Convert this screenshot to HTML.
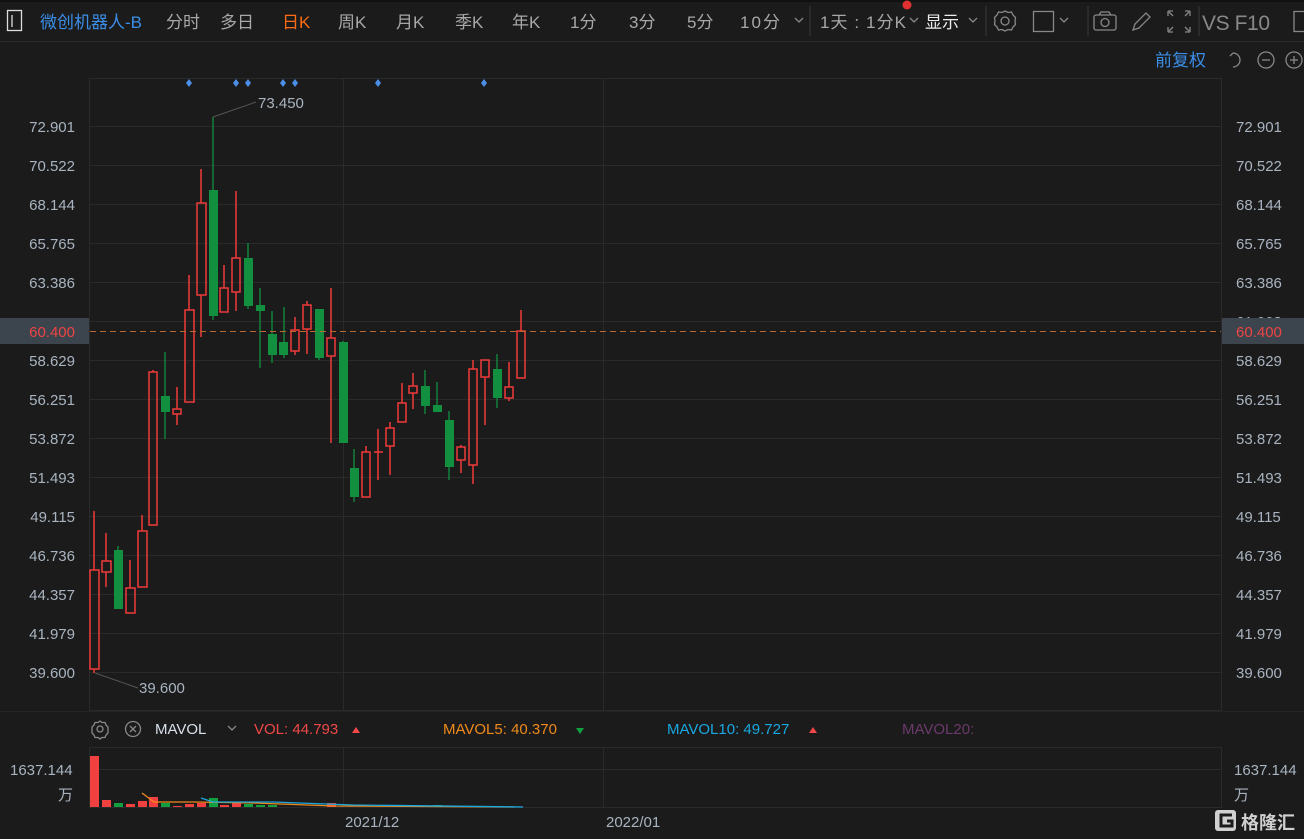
<!DOCTYPE html>
<html><head><meta charset="utf-8"><style>
*{margin:0;padding:0;box-sizing:border-box}
body{width:1304px;height:839px;background:#1b1b1b;overflow:hidden;font-family:"Liberation Sans","Noto Sans CJK SC",sans-serif;position:relative;color:#b0b0b0}
</style></head><body>
<svg width="1304" height="839" style="position:absolute;left:0;top:0" font-family="Liberation Sans, Noto Sans CJK SC, sans-serif">
<rect x="0" y="0" width="1304" height="2" fill="#111"/>
<line x1="0" y1="41.5" x2="1304" y2="41.5" stroke="#2a2a2a"/>
<rect x="7.5" y="10.5" width="14" height="20" fill="none" stroke="#ddd" stroke-width="1.3"/>
<line x1="12" y1="15" x2="12" y2="27" stroke="#ddd" stroke-width="1.3"/>
<g font-size="17" fill="#a8a8a8">
<text x="40" y="28" fill="#3b8ee8">微创机器人-B</text>
<text x="166" y="28">分时</text>
<text x="220" y="28">多日</text>
<text x="282" y="28" fill="#ff6a14">日K</text>
<text x="338" y="28">周K</text>
<text x="396" y="28">月K</text>
<text x="455" y="28">季K</text>
<text x="512" y="28">年K</text>
<text x="570" y="28">1分</text>
<text x="629" y="28">3分</text>
<text x="687" y="28">5分</text>
<text x="740" y="28" textLength="40">10分</text>
<text x="820" y="28" textLength="86">1天 : 1分K</text>
<text x="925" y="28" fill="#ececec">显示</text>
<text x="1202" y="30" font-size="21" fill="#888" textLength="68">VS F10</text>
</g>
<g stroke="#888" stroke-width="1.3" fill="none">
<path d="M795 18l4 4 4-4M910 18l4 4 4-4M969 18l4 4 4-4M1060 18l4 4 4-4"/>
<line x1="810" y1="6" x2="810" y2="36" stroke="#333"/>
<line x1="986" y1="6" x2="986" y2="36" stroke="#333"/>
<line x1="1088" y1="6" x2="1088" y2="36" stroke="#333"/>
<line x1="1199" y1="6" x2="1199" y2="36" stroke="#333"/>
<circle cx="1005" cy="21" r="4"/>
<path d="M1005 11l3 1.5 3.5-.5 1.5 3 2.5 2.5-.5 3.5.5 3.5-2.5 2.5-1.5 3-3.5-.5-3 1.5-3-1.5-3.5.5-1.5-3-2.5-2.5.5-3.5-.5-3.5 2.5-2.5 1.5-3 3.5.5z"/>
<rect x="1033.5" y="11.5" width="20" height="20"/>
<rect x="1094" y="15" width="22" height="15" rx="2"/><circle cx="1105" cy="22.5" r="4"/><path d="M1099 15l2-3h8l2 3"/>
<path d="M1133 30l2-6 11-11 4 4-11 11z"/>
<path d="M1168 11v5M1168 11h5M1190 11v5M1190 11h-5M1168 32v-5M1168 32h5M1190 32v-5M1190 32h-5M1169 12l4 4M1189 12l-4 4M1169 31l4-4M1189 31l-4-4"/>
<rect x="1294" y="11.5" width="12" height="20"/>
</g>
<circle cx="907" cy="5" r="4.5" fill="#e03030"/>
<text x="1155" y="66" font-size="17" fill="#3b8ee8">前复权</text>
<g stroke="#888" stroke-width="1.3" fill="none">
<path d="M1233 53a7 7 0 1 1 0 14M1233 53l-3 3"/>
<circle cx="1266" cy="60" r="8"/><line x1="1262" y1="60" x2="1270" y2="60"/>
<circle cx="1294" cy="60" r="8"/><line x1="1290" y1="60" x2="1298" y2="60"/><line x1="1294" y1="56" x2="1294" y2="64"/>
</g>
<g stroke="#2a2a2a" stroke-width="1">
<rect x="89.5" y="78.5" width="1132" height="632" fill="none"/>
<line x1="343.5" y1="79" x2="343.5" y2="710"/><line x1="603.5" y1="79" x2="603.5" y2="710"/>
<line x1="90" y1="126.5" x2="1221" y2="126.5"/><line x1="90" y1="165.5" x2="1221" y2="165.5"/>
<line x1="90" y1="204.5" x2="1221" y2="204.5"/><line x1="90" y1="243.5" x2="1221" y2="243.5"/>
<line x1="90" y1="282.5" x2="1221" y2="282.5"/><line x1="90" y1="321.5" x2="1221" y2="321.5"/>
<line x1="90" y1="360.5" x2="1221" y2="360.5"/><line x1="90" y1="399.5" x2="1221" y2="399.5"/>
<line x1="90" y1="438.5" x2="1221" y2="438.5"/><line x1="90" y1="477.5" x2="1221" y2="477.5"/>
<line x1="90" y1="516.5" x2="1221" y2="516.5"/><line x1="90" y1="555.5" x2="1221" y2="555.5"/>
<line x1="90" y1="594.5" x2="1221" y2="594.5"/><line x1="90" y1="633.5" x2="1221" y2="633.5"/>
<line x1="90" y1="672.5" x2="1221" y2="672.5"/>
<rect x="89.5" y="747.5" width="1132" height="60" fill="none"/>
<line x1="90" y1="769.5" x2="1221" y2="769.5"/>
<line x1="343.5" y1="748" x2="343.5" y2="807"/><line x1="603.5" y1="748" x2="603.5" y2="807"/>
</g>
<g font-size="15" fill="#a9b4c0">
<g text-anchor="end">
<text x="75" y="132">72.901</text><text x="75" y="171">70.522</text><text x="75" y="210">68.144</text>
<text x="75" y="249">65.765</text><text x="75" y="288">63.386</text>
<text x="75" y="366">58.629</text><text x="75" y="405">56.251</text><text x="75" y="444">53.872</text>
<text x="75" y="483">51.493</text><text x="75" y="522">49.115</text><text x="75" y="561">46.736</text>
<text x="75" y="600">44.357</text><text x="75" y="639">41.979</text><text x="75" y="678">39.600</text>
</g>
<text x="1236" y="132">72.901</text><text x="1236" y="171">70.522</text><text x="1236" y="210">68.144</text>
<text x="1236" y="249">65.765</text><text x="1236" y="288">63.386</text>
<text x="1236" y="366">58.629</text><text x="1236" y="405">56.251</text><text x="1236" y="444">53.872</text>
<text x="1236" y="483">51.493</text><text x="1236" y="522">49.115</text><text x="1236" y="561">46.736</text>
<text x="1236" y="600">44.357</text><text x="1236" y="639">41.979</text><text x="1236" y="678">39.600</text>
<text x="1236" y="327">61.008</text>
<text x="258" y="108">73.450</text><text x="139" y="693">39.600</text>
<text x="1234" y="775">1637.144</text><text x="1234" y="800">万</text>
<text x="10" y="775">1637.144</text><text x="58" y="800">万</text>
<text x="345" y="827">2021/12</text><text x="606" y="827">2022/01</text>
</g>
<line x1="213" y1="117" x2="256" y2="102" stroke="#555"/>
<line x1="95" y1="673" x2="138" y2="688" stroke="#555"/>
<g fill="#4a8ee8">
<path d="M189 79l3 4-3 4-3-4zM236 79l3 4-3 4-3-4zM248 79l3 4-3 4-3-4zM283 79l3 4-3 4-3-4zM295 79l3 4-3 4-3-4zM378 79l3 4-3 4-3-4zM484 79l3 4-3 4-3-4z"/>
</g>
<g stroke="#f03a3a" stroke-width="1.5" fill="none">
<path d="M94 511v59M94 669v4M106 533v28M106 572v15M130 560v28M142 515v16M153 370v2M177 387v22M177 414v11M189 275v35M201 169v34M201 295v42M224 265v23M236 191v67M236 292v19M295 317v13M295 351v4M307 301v4M307 329v25M331 288v50M331 356v87M366 446v6M378 429v51M390 422v6M390 446v29M402 383v20M413 373v13M413 393v16M461 445v2M461 460v13M473 360v9M473 465v19M485 377v48M509 362v25M509 398v3M521 310v21"/>
<rect x="90" y="570" width="9" height="99"/><rect x="102" y="561" width="9" height="11"/>
<rect x="126" y="588" width="9" height="25"/><rect x="138" y="531" width="9" height="56"/>
<rect x="149" y="372" width="8" height="153"/><rect x="173" y="409" width="8" height="5"/>
<rect x="185" y="310" width="9" height="92"/><rect x="197" y="203" width="9" height="92"/>
<rect x="220" y="288" width="8" height="24"/><rect x="232" y="258" width="8" height="34"/>
<rect x="291" y="330" width="8" height="21"/><rect x="303" y="305" width="8" height="24"/>
<rect x="327" y="338" width="8" height="18"/><rect x="362" y="452" width="8" height="45"/>
<line x1="374" y1="452" x2="383" y2="452"/><rect x="386" y="428" width="8" height="18"/>
<rect x="398" y="403" width="8" height="19"/><rect x="409" y="386" width="8" height="7"/>
<rect x="457" y="447" width="8" height="13"/><rect x="469" y="369" width="8" height="96"/>
<rect x="481" y="360" width="8" height="17"/><rect x="505" y="387" width="8" height="11"/>
<rect x="517" y="331" width="8" height="47"/>
</g>
<g stroke="#12903f" stroke-width="1.3">
<path d="M118 546v4M165 352v87M213 117v203M248 243v66M260 288v80M272 311v52M284 307v51M319 309v51M343 341v2M354 449v53M425 370v44M437 382v30M449 411v69M497 354v54"/>
</g>
<g fill="#12903f">
<rect x="114" y="550" width="9" height="59"/><rect x="161" y="396" width="9" height="16"/>
<rect x="209" y="190" width="9" height="126"/><rect x="244" y="258" width="9" height="48"/>
<rect x="256" y="305" width="9" height="6"/><rect x="268" y="334" width="9" height="21"/>
<rect x="279" y="342" width="9" height="13"/><rect x="315" y="309" width="9" height="49"/>
<rect x="339" y="342" width="9" height="101"/><rect x="350" y="468" width="9" height="29"/>
<rect x="421" y="386" width="9" height="20"/><rect x="433" y="405" width="9" height="7"/>
<rect x="445" y="420" width="9" height="47"/><rect x="493" y="369" width="9" height="29"/>
</g>
<line x1="90" y1="331.5" x2="1221" y2="331.5" stroke="#b86a30" stroke-dasharray="6,4"/>
<rect x="0" y="318" width="89" height="26" fill="#3c454d"/>
<rect x="1222" y="318" width="82" height="26" fill="#3c454d"/>
<text x="75" y="337" font-size="15" fill="#ee4444" text-anchor="end">60.400</text>
<text x="1236" y="337" font-size="15" fill="#ee4444">60.400</text>
<line x1="0" y1="711.5" x2="1304" y2="711.5" stroke="#242424"/>
<g stroke="#888" stroke-width="1.3" fill="none">
<circle cx="100" cy="729" r="3"/><path d="M100 721l2 1.5 3 0 1 2.5 2 2v3v3l-2 2-1 2.5-3 0-2 1.5-2-1.5-3 0-1-2.5-2-2v-3v-3l2-2 1-2.5 3 0z"/>
<circle cx="133" cy="729" r="7.5"/><path d="M130 726l6 6M136 726l-6 6"/>
<path d="M228 726l4 4 4-4"/>
</g>
<g font-size="15">
<text x="155" y="734" fill="#d8e0ea">MAVOL</text>
<text x="254" y="734" fill="#f04848">VOL: 44.793</text>
<text x="443" y="734" fill="#f08a1c">MAVOL5: 40.370</text>
<text x="667" y="734" fill="#1aa8e0">MAVOL10: 49.727</text>
<text x="902" y="734" fill="#6a3a6a">MAVOL20:</text>
</g>
<path d="M352 733l4-6 4 6z" fill="#f04848"/><path d="M576 728l4 6 4-6z" fill="#12a040"/><path d="M809 733l4-6 4 6z" fill="#f04848"/>
<g fill="#f04040">
<rect x="90" y="756" width="9" height="51"/><rect x="102" y="800" width="9" height="7"/>
<rect x="126" y="804" width="9" height="3"/><rect x="138" y="801" width="9" height="6"/>
<rect x="149" y="797" width="9" height="10"/><rect x="173" y="806" width="9" height="1"/>
<rect x="185" y="804" width="9" height="3"/><rect x="197" y="803" width="9" height="4"/>
<rect x="220" y="805" width="9" height="2"/><rect x="232" y="803" width="9" height="4"/>
<rect x="327" y="803" width="9" height="4"/>
</g>
<g fill="#10a040">
<rect x="114" y="803" width="9" height="4"/><rect x="161" y="803" width="9" height="4"/>
<rect x="209" y="798" width="9" height="9"/><rect x="244" y="804" width="9" height="3"/>
<rect x="256" y="805" width="9" height="2"/><rect x="268" y="805" width="9" height="2"/>
<rect x="433" y="805" width="9" height="2"/>
</g>
<path d="M142 793l12 9 40 0 60 1 80 3 180 1" stroke="#f08a1c" stroke-width="1.3" fill="none"/>
<path d="M201 798l12 4 60 0 80 3 170 2" stroke="#1aa8e0" stroke-width="1.3" fill="none"/>
<rect x="1215" y="810" width="21" height="21" rx="3" fill="#d0d0d0"/>
<path d="M1232 815h-11v11h11v-5h-5" stroke="#1b1b1b" stroke-width="3" fill="none"/>
<text x="1241" y="829" font-size="18" fill="#d0d0d0" font-weight="bold">格隆汇</text>
</svg>
</body></html>
